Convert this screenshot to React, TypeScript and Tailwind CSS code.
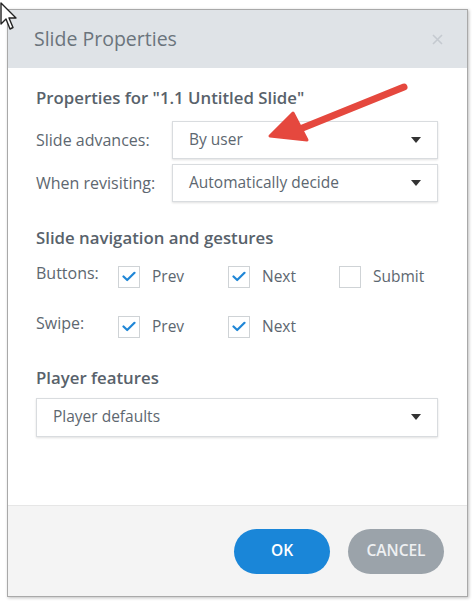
import React from "react";

const font = { fontFamily: '"Open Sans", "Noto Sans", sans-serif' };

function Caret() {
  return (
    <svg width="10" height="6" viewBox="0 0 10 6" className="shrink-0">
      <path d="M0 0 L10 0 L5 6 Z" fill="#333" />
    </svg>
  );
}

function Select({ text, className }: { text: string; className: string }) {
  return (
    <div
      className={`flex items-center justify-between border border-[#d9dcdf] bg-white pl-[16px] pr-[16px] shadow-[0_1px_2px_rgba(0,0,0,0.12)] ${className}`}
    >
      <span className="text-[15.5px] text-[#5d6770]">{text}</span>
      <Caret />
    </div>
  );
}

function Check({ checked, label, className }: { checked: boolean; label: string; className?: string }) {
  return (
    <div className={`flex items-center ${className ?? ""}`}>
      <div className="flex h-[22px] w-[22px] items-center justify-center border border-[#cfd3d6] bg-white">
        {checked && (
          <svg width="14" height="11" viewBox="0 0 14 11">
            <path d="M1.5 5.5 L5.2 9 L12.5 1.8" fill="none" stroke="#1f86d6" strokeWidth="2.2" strokeLinecap="round" strokeLinejoin="round" />
          </svg>
        )}
      </div>
      <span className="ml-[12px] text-[15.5px] text-[#5d6770]">{label}</span>
    </div>
  );
}

export default function App() {
  return (
    <div className="relative h-[604px] w-[474px] overflow-hidden bg-white" style={font}>
      <div className="ml-[7px] mt-[9px] flex h-[588px] w-[461px] flex-col border border-[#a9a9a9] shadow-[1px_1px_3px_rgba(0,0,0,0.25)]">
        {/* Header */}
        <div className="flex h-[58px] items-center justify-between bg-[#dfe3e7] pl-[26px] pr-[24px]">
          <span className="text-[19.5px] text-[#6b747c]">Slide Properties</span>
          <svg width="11" height="11" viewBox="0 0 11 11">
            <path d="M1 1 L10 10 M10 1 L1 10" stroke="#c5cad0" strokeWidth="1.6" />
          </svg>
        </div>
        {/* Body */}
        <div className="relative flex-1 bg-white pl-[28px] pr-[29px]">
          <div className="mt-[18px] text-[16.8px] font-semibold leading-[24px] text-[#58626b]">Properties for "1.1 Untitled Slide"</div>
          <div className="mt-[11px] flex items-center">
            <span className="w-[136px] text-[16px] text-[#5d6770]">Slide advances:</span>
            <Select text="By user" className="h-[38px] flex-1" />
          </div>
          <div className="mt-[5px] flex items-center">
            <span className="w-[136px] text-[16px] text-[#5d6770]">When revisiting:</span>
            <Select text="Automatically decide" className="h-[38px] flex-1" />
          </div>

          <div className="mt-[24px] text-[16.8px] font-semibold leading-[24px] text-[#58626b]">Slide navigation and gestures</div>
          <div className="mt-[15px] flex items-start">
            <span className="w-[82px] mt-[-1px] text-[16px] leading-[18px] text-[#5d6770]">Buttons:</span>
            <div className="flex">
              <Check checked label="Prev" className="w-[110px]" />
              <Check checked label="Next" className="w-[111px]" />
              <Check checked={false} label="Submit" />
            </div>
          </div>
          <div className="mt-[27px] flex items-start">
            <span className="w-[82px] mt-[-1px] text-[16px] leading-[18px] text-[#5d6770]">Swipe:</span>
            <div className="flex">
              <Check checked label="Prev" className="w-[110px]" />
              <Check checked label="Next" />
            </div>
          </div>

          <div className="mt-[27px] text-[16.8px] font-semibold leading-[24px] text-[#58626b]">Player features</div>
          <Select text="Player defaults" className="mt-[8px] h-[39px]" />

          {/* Red arrow annotation */}
          <svg className="pointer-events-none absolute left-[250px] top-[10px]" width="160" height="70" viewBox="0 0 160 70">
            <path d="M146 9 L42 51" stroke="#e5483e" strokeWidth="7" strokeLinecap="round" />
            <path d="M12 58 L35 35 L49 62 Z" fill="#e5483e" stroke="#e5483e" strokeWidth="3" strokeLinejoin="round" />
          </svg>
        </div>
        {/* Footer */}
        <div className="flex h-[91px] items-center justify-end gap-[18px] border-t border-[#e6e6e6] bg-[#f4f4f4] pr-[23px]">
          <button className="h-[45px] w-[96px] rounded-full bg-[#1a86d8] text-[15.5px] font-semibold text-white">OK</button>
          <button className="h-[45px] w-[96px] rounded-full bg-[#9ba3aa] text-[15.5px] font-semibold text-[#eef0f2]">CANCEL</button>
        </div>
      </div>

      {/* Mouse cursor */}
      <svg className="pointer-events-none absolute left-0 top-[2px]" width="18" height="30" viewBox="0 0 18 30">
        <path d="M1 1 L1 22 L6 17 L10 27 L13 25.5 L9 16 L16 16 Z" fill="#fff" stroke="#222" strokeWidth="1.4" strokeLinejoin="round" />
      </svg>
    </div>
  );
}
